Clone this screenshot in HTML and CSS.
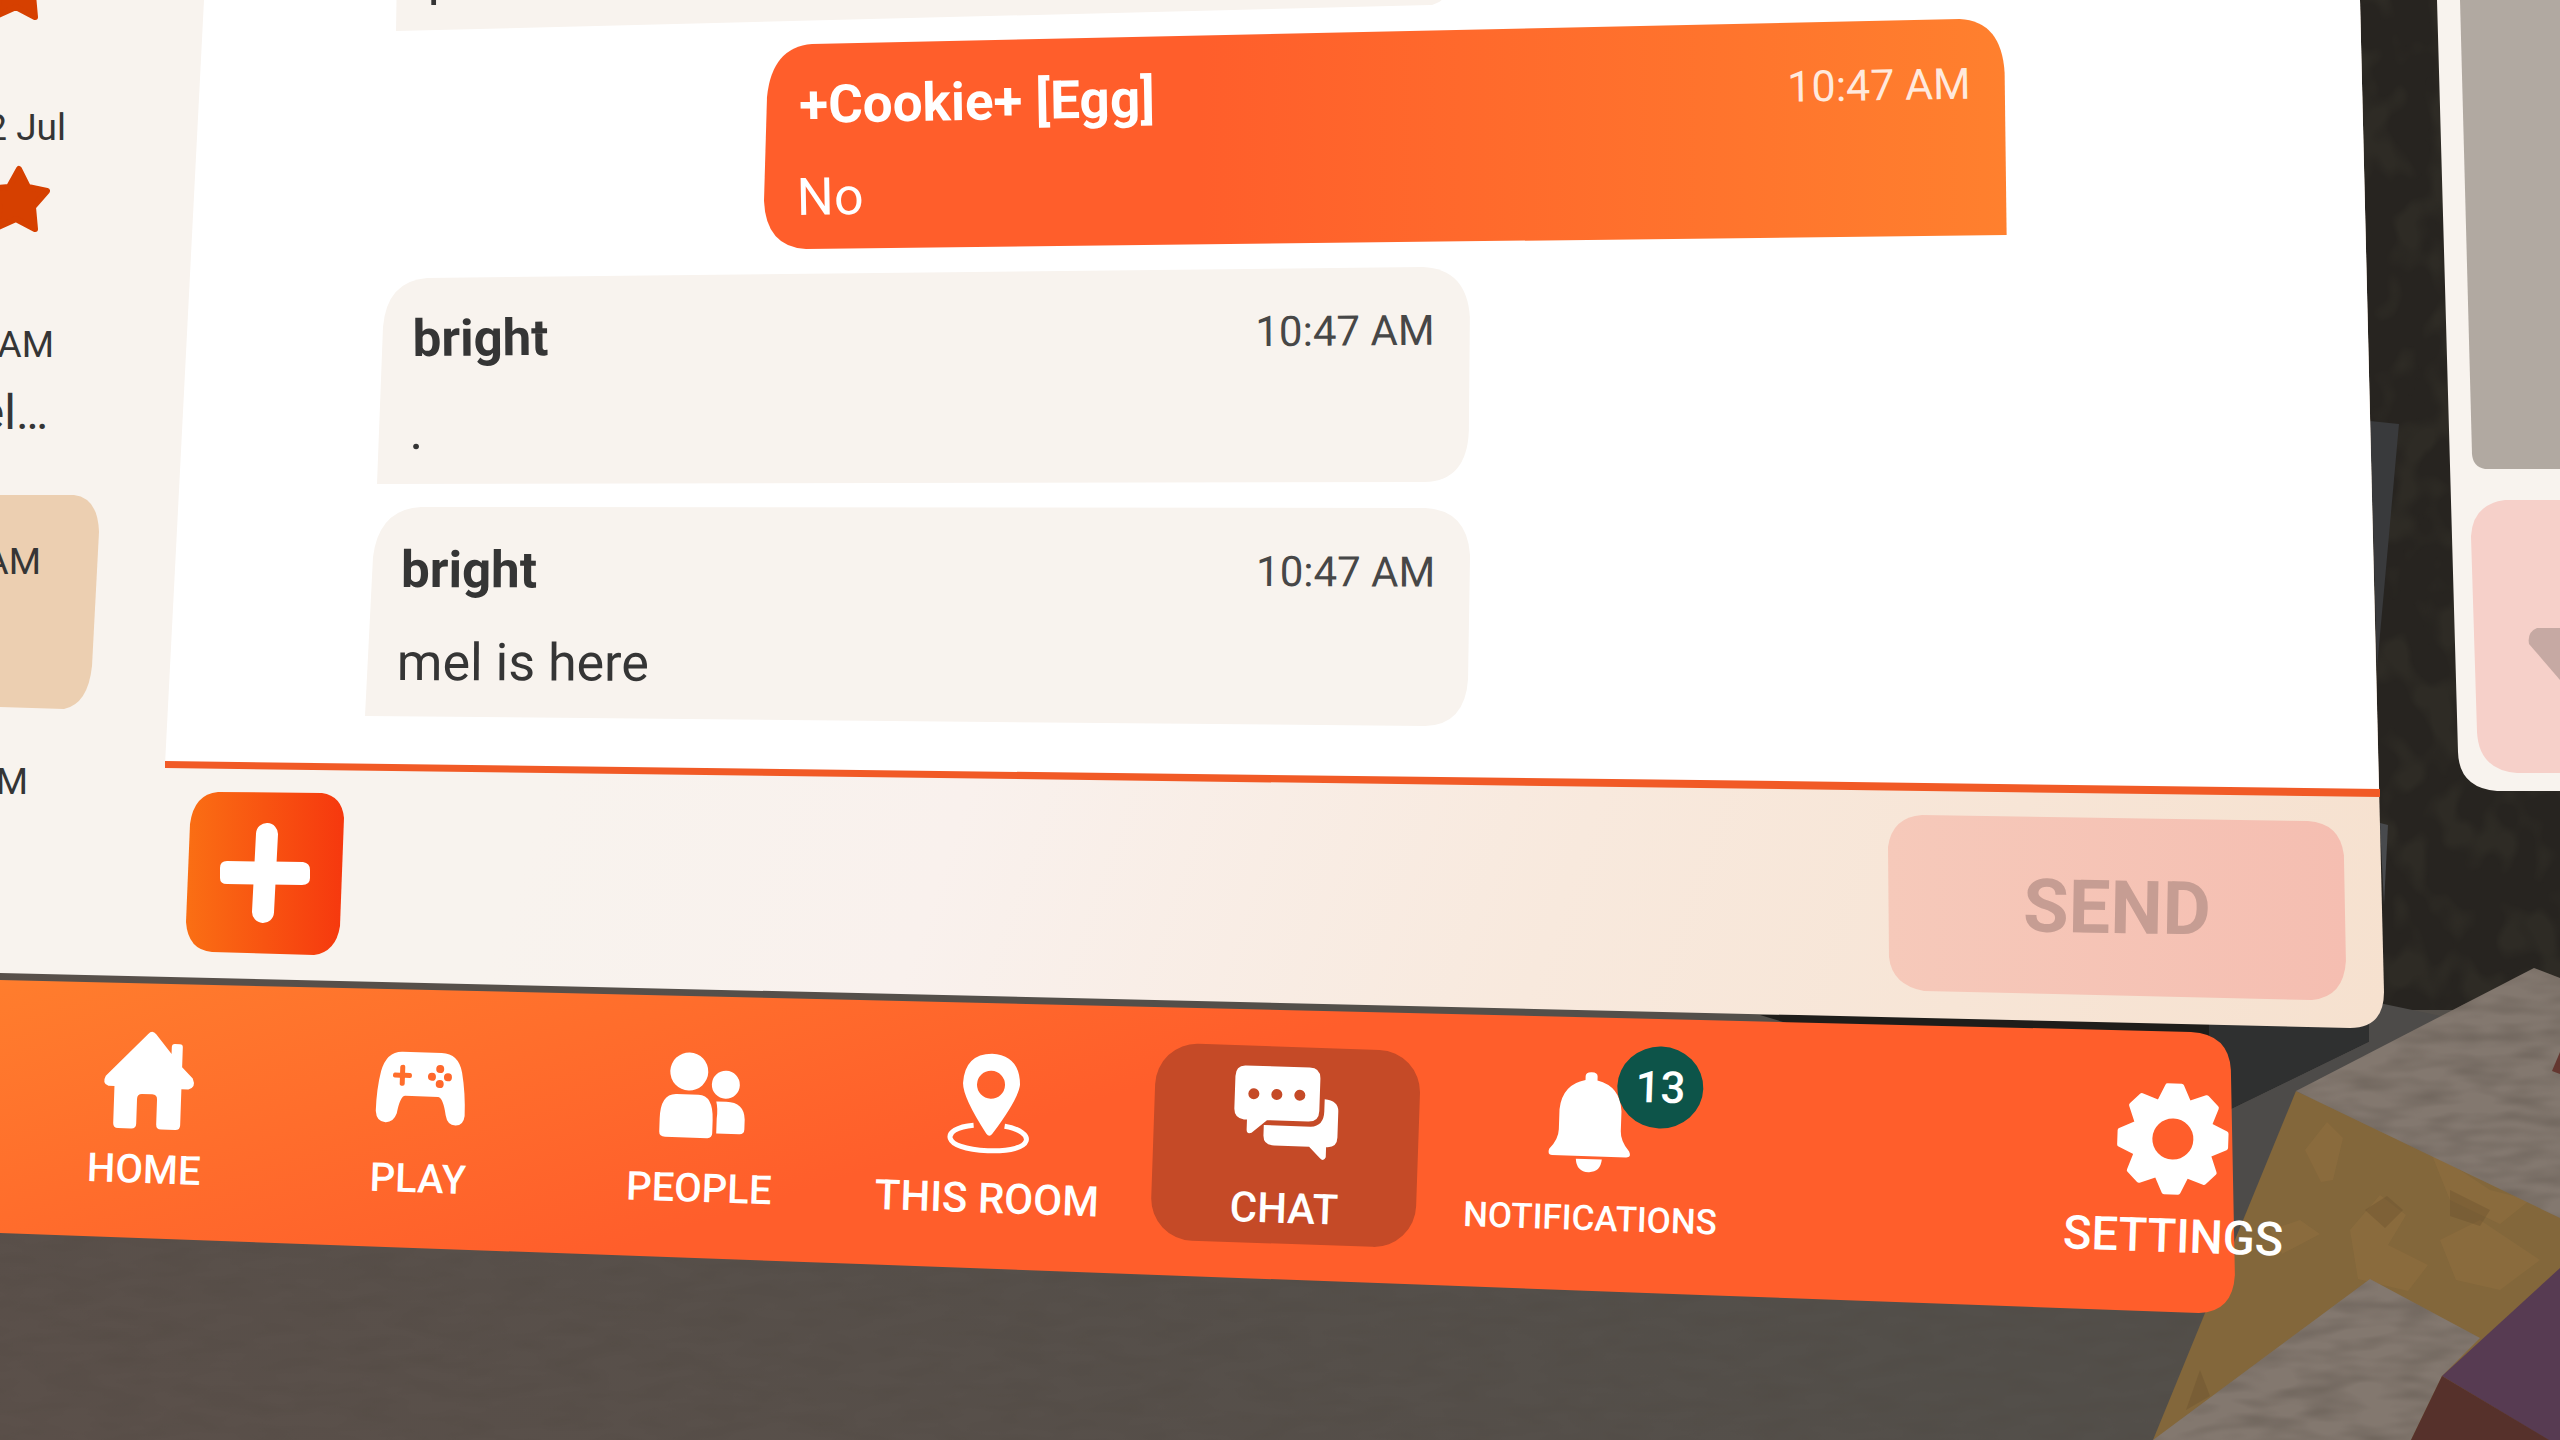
FILE: index.html
```html
<!DOCTYPE html>
<html lang="en">
<head>
<meta charset="utf-8">
<meta name="viewport" content="width=device-width, initial-scale=1">
<title>Chat</title>
<link rel="stylesheet" href="styles.css">
</head>
<body>
<div class="room">

  <!-- Scenery behind the floating panels -->
  <svg class="scenery" viewBox="0 0 2560 1440" preserveAspectRatio="none" aria-hidden="true">
    <defs>
      <linearGradient id="floor" x1="0" y1="1" x2="0.4" y2="0.6">
        <stop offset="0" stop-color="#5b504a"/>
        <stop offset="1" stop-color="#534f4a"/>
      </linearGradient>
      <filter id="rough" x="0" y="0" width="100%" height="100%" color-interpolation-filters="sRGB">
        <feTurbulence type="fractalNoise" baseFrequency="0.028 0.022" numOctaves="2" seed="4" result="n"/>
        <feColorMatrix in="n" type="matrix" values="0 0 0 0 0.2  0 0 0 0 0.19  0 0 0 0 0.16  5 0 0 0 -2.4"/>
        <feComposite in2="SourceGraphic" operator="in"/>
      </filter>
      <filter id="grain" x="0" y="0" width="100%" height="100%" color-interpolation-filters="sRGB">
        <feTurbulence type="fractalNoise" baseFrequency="0.02 0.07" numOctaves="2" seed="9" result="n"/>
        <feColorMatrix in="n" type="matrix" values="0 0 0 0 0.28  0 0 0 0 0.25  0 0 0 0 0.22  1.6 0 0 0 -0.6"/>
        <feComposite in2="SourceGraphic" operator="in"/>
      </filter>
    </defs>
    <rect width="2560" height="1440" fill="url(#floor)"/>
    <path d="M2340 0H2560V1010H2384L2340 1030Z" fill="#272420"/>
    <path d="M2340 0H2560V1010H2340Z" filter="url(#rough)" opacity="0.6"/>
    <path d="M2370 421L2399 424L2377 668Z" fill="#393a3c"/>
    <path d="M2380 823L2388 825L2384 905Z" fill="#484a4d"/>
    <path d="M1760 1015L2209 1015V1040L1800 1027Z" fill="#1f1d1a"/>
    <path d="M2209 1010H2369V1042L2209 1120Z" fill="#2f3030"/>
    <path d="M2369 1000L2384 1004L2460 1020L2296 1092L2225 1270L2209 1120L2369 1042Z" fill="#4d4b49"/>
    <path d="M0 1200H2240V1440H0Z" filter="url(#grain)" opacity="0.2"/>
    <path d="M2296 1091L2560 1210V1440H2153Z" fill="#83673b"/>
    <path d="M2305 1150l22-28 16 16-10 42-12 2zM2350 1230l30-35 26 20-18 30 40 20-20 26-50-12zM2430 1150l60 40 40 10-30 24-50-24zM2270 1230l30-10 20 14-38 20zM2440 1240l40-20 60 40-40 30-44-10z" fill="#906f40" opacity="0.55"/>
    <path d="M2365 1210l22-14 16 14-18 18zM2450 1190l40 20-10 16-30-10zM2200 1370l10 26-24 14z" fill="#6b5230" opacity="0.4"/>
    <path d="M2296 1091L2534 968L2560 978V1218Z" fill="#83786f"/>
    <path d="M2296 1091L2534 968L2560 978V1218Z" filter="url(#grain)" opacity="0.4"/>
    <path d="M2153 1440L2370 1279L2480 1338L2442 1376L2411 1440Z" fill="#83786f"/>
    <path d="M2153 1440L2370 1279L2480 1338L2442 1376L2411 1440Z" filter="url(#grain)" opacity="0.4"/>
    <path d="M2560 1268L2442 1376L2560 1447Z" fill="#573b52"/>
    <path d="M2442 1376L2411 1440H2549Z" fill="#56312b"/>
    <path d="M2560 1052L2552 1071L2560 1074Z" fill="#643730"/>
  </svg>

  <div class="panels">

    <main class="chat">
      <svg class="surface" viewBox="0 0 2384 1028" preserveAspectRatio="none" aria-hidden="true">
        <defs>
          <linearGradient id="composer-fill" gradientUnits="userSpaceOnUse" x1="600" y1="640" x2="2300" y2="1240">
            <stop offset="0" stop-color="#f8f3ee"/>
            <stop offset="0.22" stop-color="#f9f1ed"/>
            <stop offset="0.55" stop-color="#f8e9dd"/>
            <stop offset="1" stop-color="#f6e1cf"/>
          </linearGradient>
        </defs>
        <path d="M0 0H2360L2384 992Q2384 1028 2350 1028L0 973Z" fill="url(#composer-fill)"/>
        <path d="M204 0H2360L2379 794L165 765Z" fill="#fff"/>
        <path d="M165 761L860 770L1700 780L2380 789V797L1700 788L860 777L165 768Z" fill="#f15a26"/>
      </svg>

      <aside class="rooms" aria-label="Conversations">
        <a class="room-item" href="#c1" aria-label="Favourite conversation">
          <svg class="star" viewBox="0 0 70 70" aria-hidden="true"><path d="M39 5L48 23L67 27L53 43L55 65L36 55L16 64L20 43L4 25L29 23Z"/></svg>
        </a>
        <a class="room-item" href="#c2">
          <span class="when">2 Jul</span>
          <svg class="star" viewBox="0 0 70 70" aria-hidden="true"><path d="M39 5L48 23L67 27L53 43L55 65L36 55L16 64L20 43L4 25L29 23Z"/></svg>
        </a>
        <a class="room-item" href="#c3">
          <span class="when">AM</span>
          <span class="preview">el…</span>
        </a>
        <a class="room-item" href="#c4" aria-current="true">
          <svg class="surface" viewBox="0 0 99 213" preserveAspectRatio="none" aria-hidden="true"><path d="M0 -1H74Q98 2 99 36L92 170Q88 208 64 213L0 211Z" fill="#eccfb1"/></svg>
          <span class="when">AM</span>
        </a>
        <a class="room-item" href="#c5">
          <span class="when">AM</span>
        </a>
      </aside>

      <section class="thread" aria-label="Messages">
        <article class="message message-earlier">
          <svg class="surface" viewBox="0 0 1049 218" preserveAspectRatio="none" aria-hidden="true"><path d="M4 0H1049V206Q1045 214 1034 216L0 242Z" fill="#f8f3ee"/></svg>
          <p class="text">p</p>
        </article>
        <article class="message message-own">
          <svg class="surface" viewBox="0 0 1243 230" preserveAspectRatio="none" aria-hidden="true">
            <defs><linearGradient id="own-fill"><stop offset="0.35" stop-color="#ff5e2b"/><stop offset="1" stop-color="#ff802e"/></linearGradient></defs>
            <path d="M48 25L1196 0Q1238 2 1241 54L1243 216L42 230Q2 228 0 182L3 78Q8 28 48 25Z" fill="url(#own-fill)"/>
          </svg>
          <div class="tilt">
            <header><h2>+Cookie+ [Egg]</h2><time>10:47 AM</time></header>
            <p class="text">No</p>
          </div>
        </article>
        <article class="message message-dot">
          <svg class="surface" viewBox="0 0 1093 222" preserveAspectRatio="none" aria-hidden="true"><path d="M50 11L1046 0Q1090 2 1093 50L1092 164Q1090 214 1048 215L0 217L6 60Q10 14 50 11Z" fill="#f8f3ee"/></svg>
          <div class="tilt">
            <header><h2>bright</h2><time>10:47 AM</time></header>
            <p class="text">.</p>
          </div>
        </article>
        <article class="message message-last">
          <svg class="surface" viewBox="0 0 1105 220" preserveAspectRatio="none" aria-hidden="true"><path d="M56 0L1060 1Q1102 3 1105 48L1103 172Q1100 218 1060 219L0 209L8 50Q14 2 56 0Z" fill="#f8f3ee"/></svg>
          <div class="tilt">
            <header><h2>bright</h2><time>10:47 AM</time></header>
            <p class="text">mel is here</p>
          </div>
        </article>
      </section>

      <form class="composer">
        <button class="attach" type="button" aria-label="Add">
          <svg viewBox="0 0 158 163" preserveAspectRatio="none" aria-hidden="true">
            <defs><linearGradient id="attach-fill"><stop offset="0" stop-color="#fa6f14"/><stop offset="1" stop-color="#f6380e"/></linearGradient></defs>
            <path d="M32 0L136 1Q156 4 158 26L154 134Q150 160 128 163L26 160Q2 158 0 130L4 32Q8 2 32 0Z" fill="url(#attach-fill)"/>
            <path d="M81 42L77 120" stroke="#fff" stroke-width="22" stroke-linecap="round"/>
            <path d="M41 69L117 70Q124 71 124 78V86Q124 93 116 93L41 92Q34 92 34 86V76Q34 69 41 69Z" fill="#fff"/>
          </svg>
        </button>
        <input class="field" type="text" aria-label="Message">
        <button class="send" type="submit" disabled>
          <svg class="surface" viewBox="0 0 458 185" preserveAspectRatio="none" aria-hidden="true">
            <defs><linearGradient id="send-fill"><stop offset="0" stop-color="#f6c9ba"/><stop offset="1" stop-color="#f5beb1"/></linearGradient></defs>
            <path d="M34 0L420 6Q452 8 456 40L458 146Q456 182 424 185L36 176Q4 170 1 142L0 32Q4 2 34 0Z" fill="url(#send-fill)"/>
          </svg>
          <span>SEND</span>
        </button>
      </form>
    </main>

    <aside class="side" aria-label="Preview">
      <svg class="surface" viewBox="0 0 123 791" preserveAspectRatio="none" aria-hidden="true">
        <path d="M0 0H123V791H60Q22 788 21 752Z" fill="#f8f3ee"/>
        <path d="M23 0H123V469H48Q36 467 35 454Z" fill="#b1a9a1"/>
      </svg>
      <button class="scroll-down" type="button" aria-label="Scroll down">
        <svg viewBox="0 0 89 273" preserveAspectRatio="none" aria-hidden="true">
          <path d="M34 0H89V273H46Q8 270 6 232L0 36Q2 4 34 0Z" fill="#f6d0c9"/>
          <path d="M89 128H66Q56 132 58 144L89 180Z" fill="#c6a9a3"/>
        </svg>
      </button>
    </aside>
  </div>

  <nav class="dock" aria-label="Main">
    <svg class="dock-surface" viewBox="0 0 2234 333" preserveAspectRatio="none" aria-hidden="true">
      <defs>
        <linearGradient id="dock-fill" gradientUnits="userSpaceOnUse" x1="0" y1="0" x2="130" y2="420">
          <stop offset="0" stop-color="#ff7d2d"/><stop offset="1" stop-color="#ff5e2b"/>
        </linearGradient>
      </defs>
      <path d="M0 0L860 20L1700 40L2190 52Q2228 54 2230 90L2234 295Q2232 332 2198 333L1700 315L860 284L0 253Z" fill="url(#dock-fill)"/>
    </svg>
    <ul>
      <li><button type="button">
        <svg class="icon" viewBox="0 0 120 110" aria-hidden="true"><path d="M60 17Q64 12 68 17L84 36V29Q84 26 87 26H92Q95 26 95 29V49L106 60Q110 69 102 71H95V107Q95 112 90 112H76Q71 112 71 107V82Q71 77 66 77H56Q51 77 51 82V107Q51 112 46 112H33Q28 112 28 107V70H22Q15 68 19 60Z"/></svg>
        <span>HOME</span></button></li>
      <li><button type="button">
        <svg class="icon" viewBox="0 0 120 110" aria-hidden="true"><path fill-rule="evenodd" d="M41 26H80Q97 26 101 45Q105 65 105 88Q104 98 96 98Q88 98 86 88Q83 71 78 70H45Q40 70 37 88Q34 97 26 97Q17 97 16 86Q16 64 20 46Q25 26 41 26ZM39 41Q39 39 42 39Q44 39 44 41V47H49Q51 47 51 50Q51 52 49 52H44V58Q44 60 42 60Q39 60 39 58V52H34Q32 52 32 50Q32 47 34 47H39Z"/><g class="cut"><circle cx="79" cy="42" r="4"/><circle cx="79" cy="57" r="4"/><circle cx="71" cy="50" r="4"/><circle cx="87" cy="50" r="4"/></g></svg>
        <span>PLAY</span></button></li>
      <li><button type="button">
        <svg class="icon" viewBox="0 0 120 110" aria-hidden="true"><circle cx="46" cy="36" r="19"/><path d="M18 84Q18 59 34 59H56Q71 59 71 84V97Q71 102 66 102H24Q18 102 18 97Z"/><circle cx="83" cy="48" r="14"/><path d="M74 65H84Q102 65 103 82V92Q103 97 98 97H75V82Q76 72 74 65Z"/></svg>
        <span>PEOPLE</span></button></li>
      <li><button class="mid" type="button">
        <svg class="icon" viewBox="0 0 120 110" aria-hidden="true"><path fill-rule="evenodd" d="M60 8Q88 9 89 38Q88 52 63 88Q60 92 57 88Q32 52 32 38Q33 9 60 8ZM60 25A14 14 0 1 0 60 53A14 14 0 1 0 60 25Z"/><path d="M44 80C10 84 12 105 59 105C108 105 106 84 75 80" fill="none" stroke="#fff" stroke-width="5"/></svg>
        <span>THIS ROOM</span></button></li>
      <li><button class="mid" type="button" aria-current="page">
        <svg class="icon" viewBox="0 0 120 110" aria-hidden="true"><path fill-rule="evenodd" d="M17 11H81Q92 11 92 22V54Q92 65 81 65H40L25 78Q20 80 20 75V65H17Q7 64 7 54V22Q7 11 17 11ZM26 33.500A5.500 5.500 0 1 0 26 44.500A5.500 5.500 0 1 0 26 33.500ZM49 33.500A5.500 5.500 0 1 0 49 44.500A5.500 5.500 0 1 0 49 33.500ZM72 33.500A5.500 5.500 0 1 0 72 44.500A5.500 5.500 0 1 0 72 33.500Z"/><path d="M97 42Q111 43 111 54V80Q111 90 101 90H100V100Q98 105 94 101L83 90H48Q37 90 37 80V70H84Q97 69 97 54Z"/></svg>
        <span>CHAT</span></button></li>
      <li><button class="long" type="button">
        <span class="with-badge">
          <svg class="icon" viewBox="0 0 120 110" aria-hidden="true"><path d="M51 14V10Q51 6 57 6Q63 6 63 10V14Q86 19 88 44V64Q88 74 97 84Q100 90 94 90H20Q15 90 17 84Q26 74 26 64V44Q28 19 51 14Z"/><path d="M44 93H70Q69 106 57 106Q45 106 44 93Z"/></svg>
          <span class="badge">13</span>
        </span>
        <span>NOTIFICATIONS</span></button></li>
      <li class="last"><button class="big" type="button">
        <svg class="icon" viewBox="0 0 120 110" aria-hidden="true"><g transform="translate(56 53)"><circle r="31" fill="none" stroke="#fff" stroke-width="21"/><g class="teeth"><path id="tooth" d="M-7 -53H7L14 -38H-14Z"/><use href="#tooth" transform="rotate(45)"/><use href="#tooth" transform="rotate(90)"/><use href="#tooth" transform="rotate(135)"/><use href="#tooth" transform="rotate(180)"/><use href="#tooth" transform="rotate(225)"/><use href="#tooth" transform="rotate(270)"/><use href="#tooth" transform="rotate(315)"/></g></g></svg>
        <span>SETTINGS</span></button></li>
    </ul>
  </nav>
</div>
</body>
</html>
```
FILE: styles.css
```css
* { box-sizing: border-box; }

body {
  margin: 0;
  font-family: Roboto, "Liberation Sans", sans-serif;
  color: #353535;
}

button {
  border: 0;
  padding: 0;
  background: none;
  color: inherit;
  font: inherit;
}

h2, p, ul { margin: 0; padding: 0; }

.room {
  position: relative;
  min-height: 100vh;
  overflow: hidden;
}

.scenery,
.surface {
  position: absolute;
  inset: 0;
  width: 100%;
  height: 100%;
  overflow: visible;
}

.panels {
  position: relative;
  display: grid;
  grid-template-columns: 93.125% 1fr;
  align-items: start;
}

/* Chat window */
.chat {
  position: relative;
  display: grid;
  grid-template-columns: 165px 1fr;
  grid-template-rows: auto auto;
}

.rooms {
  position: relative;
  grid-row: 1 / 3;
  display: flex;
  flex-direction: column;
  gap: 4px;
  height: 0;
}

.room-item {
  position: relative;
  flex: none;
  display: flex;
  flex-direction: column;
  align-items: flex-end;
  gap: 14px;
  height: 213px;
  padding-top: 44px;
  color: inherit;
  text-decoration: none;
}

.room-item:nth-child(1) { height: 58px; padding: 0 115px 0 0; justify-content: flex-end; }
.room-item:nth-child(2) { padding-right: 99px; }
.room-item:nth-child(3) { padding-right: 111px; }
.room-item:nth-child(4) { margin-right: 66px; padding-right: 58px; }
.room-item:nth-child(5) { padding-right: 137px; padding-top: 47px; }

.when {
  position: relative;
  font-size: 37px;
  line-height: 44px;
  white-space: nowrap;
}

.preview {
  font-size: 48px;
  line-height: 64px;
  margin-right: 6px;
}

.star {
  flex: none;
  width: 70px;
  height: 70px;
  margin-right: 16px;
  fill: #d64000;
  stroke: #d64000;
  stroke-width: 6px;
  stroke-linejoin: round;
}

.room-item:nth-child(1) .star { margin: 0 0 36px; }

/* Messages */
.thread {
  display: flex;
  flex-direction: column;
  gap: 18px;
  padding-bottom: 41px;
}

.message {
  position: relative;
  padding-left: 36px;
  padding-right: 35px;
}

.message-earlier { width: 47.3%; margin: -211px 0 -6px 10.4%; padding-top: 158px; }
.message-own { width: 56%; margin-left: 27%; padding-top: 56px; padding-bottom: 21px; color: #fff; }
.message-dot { width: 49.25%; margin-left: 9.55%; padding-top: 42px; padding-bottom: 27px; }
.message-last { width: 49.8%; margin-left: 9%; padding-top: 33px; padding-bottom: 34px; }

.tilt { position: relative; transform-origin: left center; }
.message-own .tilt { transform: rotate(-1deg); }
.message-dot .tilt { transform: rotate(-0.4deg); }
.message-last .tilt { transform: rotate(0.2deg); }

.message header {
  display: flex;
  justify-content: space-between;
  margin-bottom: 33px;
}

.message h2 {
  font-size: 51px;
  line-height: 60px;
  font-weight: 700;
}

.message-own h2 { font-size: 53px; }

.message time {
  font-size: 42px;
  line-height: 58px;
  color: #474747;
}

.message-own time { color: #ffe9dd; font-size: 43px; }

.text {
  position: relative;
  margin-left: -4px;
  font-size: 52px;
  line-height: 60px;
}

/* Composer */
.composer {
  position: relative;
  display: flex;
  align-items: flex-start;
  padding: 24px 38px 28px 21px;
}

.attach {
  flex: none;
  width: 158px;
  height: 163px;
}

.attach svg,
.scroll-down svg {
  display: block;
  width: 100%;
  height: 100%;
}

.field {
  flex: 1;
  min-width: 0;
  align-self: stretch;
  margin: 0 24px;
  border: 0;
  background: none;
  font: inherit;
  font-size: 52px;
}

.field:focus { outline: none; }

.send {
  position: relative;
  width: 21.2%;
  height: 185px;
  margin-top: 23px;
  color: #c69d93;
  font-size: 74px;
  font-weight: 700;
  line-height: 84px;
}

.send span {
  position: relative;
  display: block;
  transform: rotate(1deg);
}

/* Side panel */
.side {
  position: relative;
  margin-left: 53px;
  padding: 500px 0 18px 34px;
}

.scroll-down {
  position: relative;
  display: block;
  width: 100%;
  height: 273px;
}

/* Bottom navigation */
.dock {
  position: relative;
  height: 333px;
  margin-top: -48px;
}

.dock-surface {
  position: absolute;
  top: 0;
  left: 0;
  width: 87.3%;
  height: 100%;
}

.dock ul {
  position: relative;
  display: grid;
  grid-template-columns: 274fr 274fr 288fr 288fr 306fr 306fr 317fr 226fr;
  width: 89.6%;
  padding: 23px 0 0 13px;
  list-style: none;
  transform: rotate(1.95deg);
  transform-origin: 0 0;
}

.dock li { display: flex; justify-content: center; min-width: 0; }
.dock .last { grid-column: 8; }

.dock button {
  display: flex;
  flex-direction: column;
  align-items: center;
  gap: 18px;
  width: 265px;
  flex: none;
  padding: 9px 0 10px;
  border-radius: 42px;
  color: #fff;
  font-size: 40px;
  font-weight: 500;
  line-height: 50px;
  white-space: nowrap;
}

.dock button[aria-current] { background: #c54a27; }
.dock .mid { font-size: 42px; }
.dock .long { font-size: 35px; }
.dock .big { font-size: 47px; line-height: 44px; }

.icon {
  display: block;
  width: 120px;
  height: 110px;
  overflow: visible;
  fill: #fff;
}

.cut { fill: #ff682c; }

.teeth {
  stroke: #fff;
  stroke-width: 5px;
  stroke-linejoin: round;
}

.with-badge { position: relative; }

.badge {
  position: absolute;
  top: -22px;
  left: 83px;
  width: 86px;
  height: 82px;
  border-radius: 50%;
  background: #0d5449;
  font-size: 44px;
  line-height: 82px;
  text-align: center;
}
```
